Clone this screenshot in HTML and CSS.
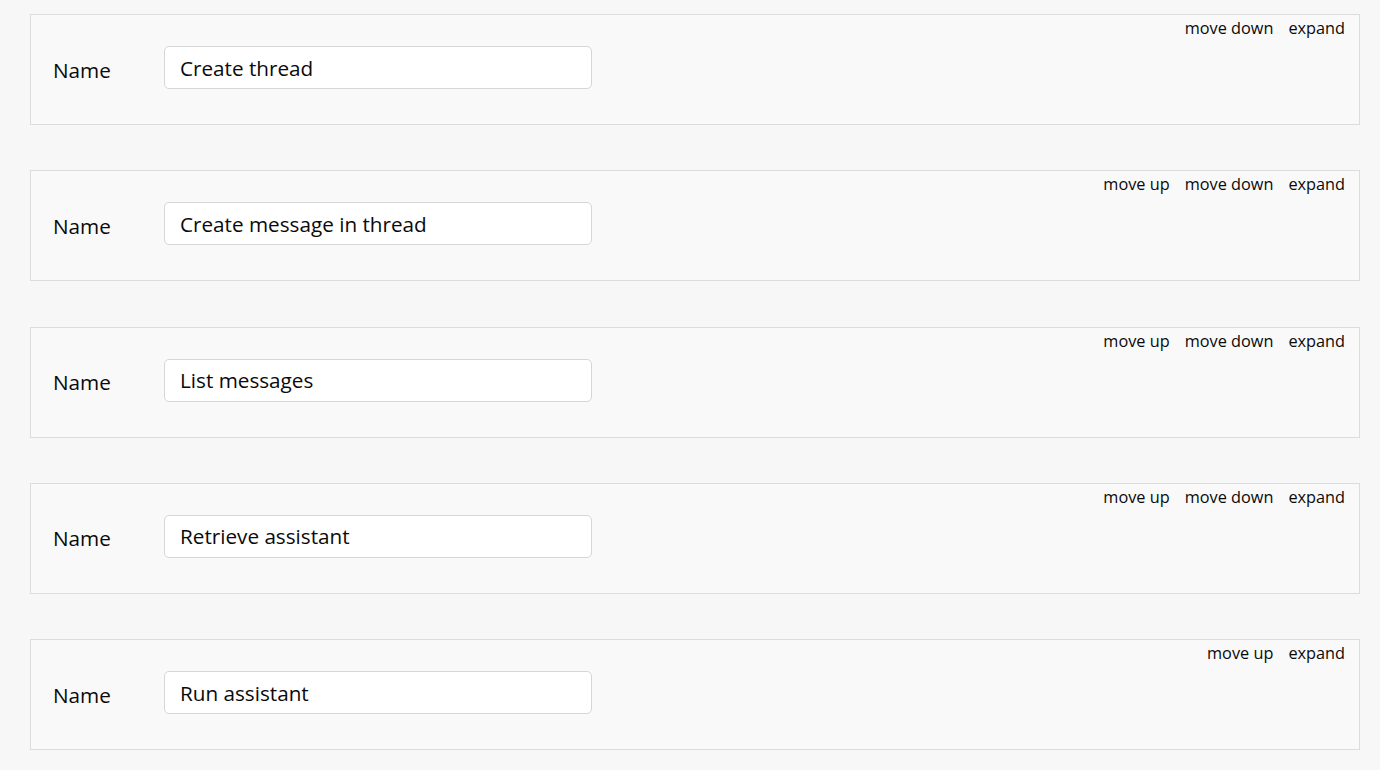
FILE: index.html
```html
<!DOCTYPE html>
<html>
<head>
<meta charset="utf-8">
<link rel="stylesheet" href="styles.css">
</head>
<body>
<div class="list">
  <div class="card">
    <div class="actions"><span>move down</span><span>expand</span></div>
    <div class="row"><label class="label">Name</label><input class="field" type="text" value="Create thread"></div>
  </div>
  <div class="card">
    <div class="actions"><span>move up</span><span>move down</span><span>expand</span></div>
    <div class="row"><label class="label">Name</label><input class="field" type="text" value="Create message in thread"></div>
  </div>
  <div class="card">
    <div class="actions"><span>move up</span><span>move down</span><span>expand</span></div>
    <div class="row"><label class="label">Name</label><input class="field" type="text" value="List messages"></div>
  </div>
  <div class="card">
    <div class="actions"><span>move up</span><span>move down</span><span>expand</span></div>
    <div class="row"><label class="label">Name</label><input class="field" type="text" value="Retrieve assistant"></div>
  </div>
  <div class="card">
    <div class="actions"><span>move up</span><span>expand</span></div>
    <div class="row"><label class="label">Name</label><input class="field" type="text" value="Run assistant"></div>
  </div>
</div>
</body>
</html>
```
FILE: styles.css
```css
html, body {
  margin: 0;
  padding: 0;
  background: #f7f7f7;
  font-family: "Open Sans", "Noto Sans", sans-serif;
  color: #0a0a0a;
}
.list {
  display: flex;
  flex-direction: column;
  gap: 45.25px;
  padding: 14px 20px 0 30px;
}
.card {
  box-sizing: border-box;
  height: 111px;
  border: 1px solid #dcdcdc;
  background: #f9f9f9;
  padding: 1px 14px 0 22px;
  display: flex;
  flex-direction: column;
}
.actions {
  display: flex;
  justify-content: flex-end;
  gap: 15px;
  font-size: 16.3px;
  line-height: 24px;
  height: 30px;
  color: #0a0a0a;
}
.row {
  display: flex;
  align-items: center;
}
.label {
  width: 111px;
  font-size: 20.7px;
  padding-top: 4px;
}
.field {
  box-sizing: border-box;
  width: 428px;
  height: 43px;
  border: 1px solid #d6d6d6;
  border-radius: 5px;
  background: #fff;
  padding: 0 15px;
  font-family: "Open Sans", "Noto Sans", sans-serif;
  font-size: 20.7px;
  color: #0a0a0a;
  outline: none;
}
```
